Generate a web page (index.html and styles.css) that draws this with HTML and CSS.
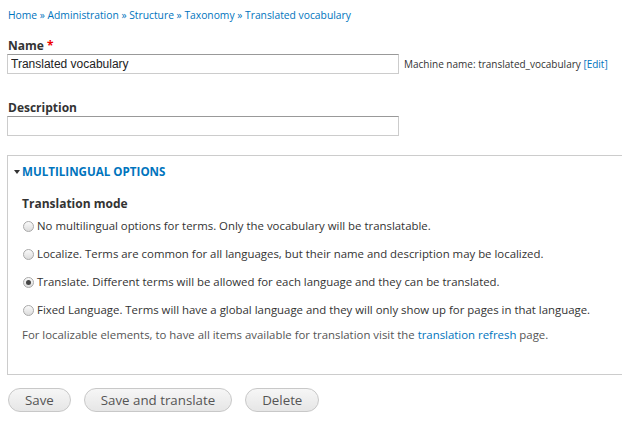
FILE: index.html
```html
<!DOCTYPE html>
<html>
<head>
<meta charset="utf-8">
<link rel="stylesheet" href="styles.css">
</head>
<body>
<div class="page">
  <nav class="breadcrumb"><a href="#">Home</a> » <a href="#">Administration</a> » <a href="#">Structure</a> » <a href="#">Taxonomy</a> » <a href="#">Translated vocabulary</a></nav>

  <div class="field field-name">
    <label class="label">Name <span class="req">*</span></label>
    <div class="row">
      <input class="text" type="text" value="Translated vocabulary">
      <span class="machine">Machine name: translated_vocabulary <a href="#">[Edit]</a></span>
    </div>
  </div>

  <div class="field field-desc">
    <label class="label">Description</label>
    <input class="text" type="text" value="">
  </div>

  <fieldset class="fs">
    <div class="legend"><span class="tri"></span><a href="#">MULTILINGUAL OPTIONS</a></div>
    <div class="fs-body">
      <div class="label mode">Translation mode</div>
      <div class="radios">
        <label class="radio"><span class="dot"></span>No multilingual options for terms. Only the vocabulary will be translatable.</label>
        <label class="radio"><span class="dot"></span>Localize. Terms are common for all languages, but their name and description may be localized.</label>
        <label class="radio"><span class="dot on"></span>Translate. Different terms will be allowed for each language and they can be translated.</label>
        <label class="radio"><span class="dot"></span>Fixed Language. Terms will have a global language and they will only show up for pages in that language.</label>
      </div>
      <p class="help">For localizable elements, to have all items available for translation visit the <a href="#">translation refresh</a> page.</p>
    </div>
  </fieldset>

  <div class="actions">
    <button class="btn">Save</button>
    <button class="btn">Save and translate</button>
    <button class="btn">Delete</button>
  </div>
</div>
</body>
</html>
```

FILE: styles.css
```css
html, body {
  margin: 0;
  padding: 0;
  background: #fff;
}
body {
  font-family: "Open Sans", "Noto Sans", sans-serif;
  font-size: 11.4px;
  color: #333;
  overflow: hidden;
}
a {
  color: #0074bd;
  text-decoration: none;
}
.page {
  padding: 7px 0 0 8px;
  display: flex;
  flex-direction: column;
}
.breadcrumb {
  font-size: 10.3px;
  line-height: 16px;
  color: #0074bd;
  height: 16px;
}
.field-name {
  margin-top: 15px;
}
.field-desc {
  margin-top: 26px;
}
.label {
  display: block;
  font-weight: bold;
  font-size: 12px;
  line-height: 16px;
  color: #333;
}
.req {
  color: #e00;
}
.row {
  display: flex;
  align-items: center;
  gap: 5px;
  margin-top: 0;
}
.text {
  box-sizing: border-box;
  width: 392px;
  height: 20px;
  margin: 0 0 0 -1px;
  padding: 1px 3px;
  border: 1px solid #ccc;
  border-top-color: #999;
  font-family: "Liberation Sans", Arial, sans-serif;
  font-size: 12px;
  color: #222;
  background: #fff;
  display: block;
}
.machine {
  font-size: 10px;
  color: #333;
}
.fs {
  margin: 19px 0 0 -1px;
  padding: 0;
  border: 1px solid #ccc;
  border-right: none;
  height: 220px;
  box-sizing: border-box;
  min-width: 0;
}
.legend {
  display: flex;
  align-items: center;
  height: 16px;
  margin: 7px 0 0 6px;
  font-weight: bold;
  font-size: 11.6px;
}
.legend a {
  color: #0074bd;
}
.tri {
  width: 0;
  height: 0;
  border-left: 3px solid transparent;
  border-right: 3px solid transparent;
  border-top: 4px solid #333;
  margin: 2px 2px 0 0;
}
.fs-body {
  padding: 17px 0 0 14px;
}
.mode {
  margin-bottom: 6px;
}
.radios {
  display: flex;
  flex-direction: column;
  gap: 12px;
}
.radio {
  display: flex;
  align-items: center;
  line-height: 16px;
  height: 16px;
  color: #333;
}
.dot {
  box-sizing: border-box;
  width: 11px;
  height: 11px;
  border-radius: 50%;
  border: 1px solid #a9a9a9;
  background: linear-gradient(#fafafa, #dcdcdc);
  margin: 0 3px 0 1px;
  position: relative;
  flex: none;
}
.dot.on::after {
  content: "";
  position: absolute;
  left: 2px;
  top: 2px;
  width: 5px;
  height: 5px;
  border-radius: 50%;
  background: #444;
}
.help {
  margin: 9px 0 0;
  line-height: 16px;
  color: #555;
}
.actions {
  display: flex;
  gap: 13px;
  margin-top: 13px;
}
.btn {
  height: 24px;
  padding: 0 16px;
  border: 1px solid #c8c8c8;
  border-radius: 12px;
  background: linear-gradient(#f6f6f6, #e6e6e6);
  font-family: "Open Sans", "Noto Sans", sans-serif;
  font-size: 13.3px;
  color: #555;
}
```
